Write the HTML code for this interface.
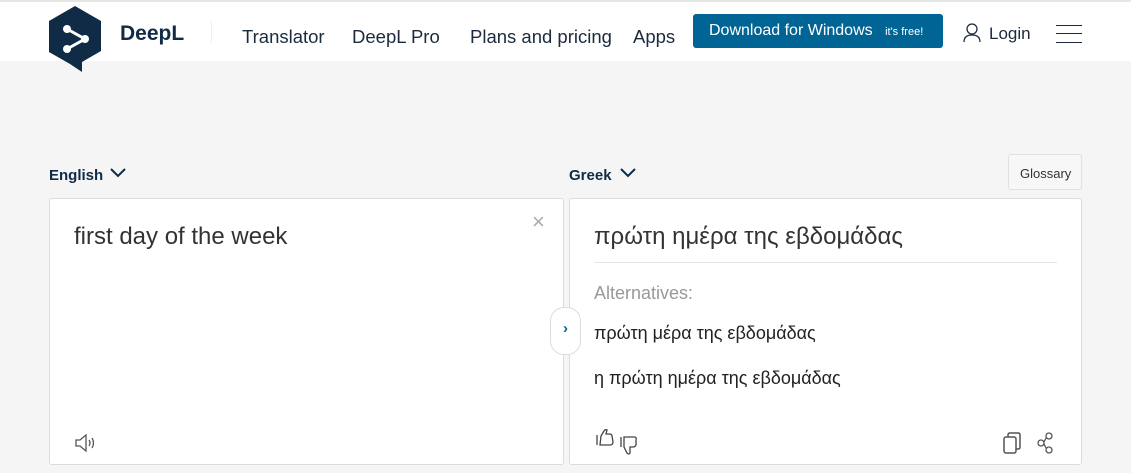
<!DOCTYPE html>
<html><head><meta charset="utf-8"><style>
*{margin:0;padding:0;box-sizing:border-box}
body{width:1131px;height:473px;overflow:hidden;background:#f5f5f5;font-family:"Liberation Sans",sans-serif;position:relative;color:#333}
.hdr{position:absolute;left:0;top:0;width:1131px;height:61px;background:#fff;border-top:2px solid #e6e6e6}
.a{position:absolute;white-space:nowrap}
.nav{font-size:18.5px;color:#1b2b3d;top:24px}
.panel{position:absolute;top:198px;height:267px;background:#fff;border:1px solid #d9dce0;border-radius:3px}
</style></head><body>
<div class="hdr">
<svg class="a" style="left:48px;top:4px" width="54" height="66" viewBox="0 0 54 66"><path d="M27 0 L53 15 L53 45 L34 56 L34 66 L22 58 L1 46 L1 15 Z" fill="#0f2b46"/><circle cx="19" cy="23" r="4" fill="#fff"/><circle cx="37" cy="33" r="4" fill="#fff"/><circle cx="19" cy="43" r="4" fill="#fff"/><path d="M19 23 L37 33 L19 43" stroke="#fff" stroke-width="3" fill="none"/></svg>
<div class="a" style="left:120px;top:20px;font-size:21px;font-weight:bold;color:#0f2b46">DeepL</div>
<div class="a" style="left:211px;top:19px;width:1px;height:22px;background:#eee"></div>
<div class="a nav" style="left:242px">Translator</div>
<div class="a nav" style="left:352px">DeepL Pro</div>
<div class="a nav" style="left:470px">Plans and pricing</div>
<div class="a nav" style="left:633px">Apps</div>
<div class="a" style="left:693px;top:12px;width:250px;height:34px;background:#006494;border-radius:3px;color:#fff;font-size:16px;padding:8px 0 0 16px">Download for Windows <span style="font-size:11px;margin-left:8px">it's free!</span></div>
<svg class="a" style="left:962px;top:21px" width="20" height="20" viewBox="0 0 20 20"><circle cx="10" cy="6" r="5" stroke="#1b2b3d" stroke-width="1.3" fill="none"/><path d="M2 19 Q2 12 10 12 Q18 12 18 19" stroke="#1b2b3d" stroke-width="1.3" fill="none"/></svg>
<div class="a" style="left:989px;top:22px;font-size:17px;color:#1b2b3d">Login</div>
<div class="a" style="left:1056px;top:23px;width:26px;height:18px;border-top:1.5px solid #1b2b3d;border-bottom:1.5px solid #1b2b3d"><div style="margin-top:6.5px;border-top:1.5px solid #1b2b3d"></div></div>
</div>
<div class="a" style="left:49px;top:167px;font-size:15px;font-weight:bold;color:#0f2b46">English</div>
<div class="a" style="left:569px;top:167px;font-size:15px;font-weight:bold;color:#0f2b46">Greek</div>
<svg class="a" style="left:109px;top:167px" width="18" height="12"><path d="M2 2 L9 9 L16 2" stroke="#0f2b46" stroke-width="2" fill="none"/></svg>
<svg class="a" style="left:619px;top:167px" width="18" height="12"><path d="M2 2 L9 9 L16 2" stroke="#0f2b46" stroke-width="2" fill="none"/></svg>
<div class="a" style="left:1008px;top:154px;width:74px;height:36px;border:1px solid #e0e0e0;background:#f7f7f7;border-radius:3px;font-size:13px;padding:11px 0 0 11px;color:#333">Glossary</div>
<div class="panel" style="left:49px;width:515px">
<div class="a" style="left:24px;top:24px;font-size:24px;color:#333">first day of the week</div>
<div class="a" style="left:482px;top:10px;font-size:22px;color:#aaa">×</div>
<svg class="a" style="left:24px;top:234px" width="26" height="20" viewBox="0 0 26 20"><path d="M2 7 H6 L12 2 V18 L6 13 H2 Z" stroke="#555" stroke-width="1.3" fill="none"/><path d="M15 7 Q17 10 15 13 M18 5 Q21 10 18 15" stroke="#555" stroke-width="1.3" fill="none"/></svg>
</div>
<div class="panel" style="left:569px;width:513px">
<div class="a" style="left:24px;top:24px;font-size:24px;color:#333">πρώτη ημέρα της εβδομάδας</div>
<div class="a" style="left:24px;top:63px;width:463px;height:1px;background:#e5e5e5"></div>
<div class="a" style="left:24px;top:84px;font-size:18px;color:#999">Alternatives:</div>
<div class="a" style="left:24px;top:124px;font-size:18px;color:#222">πρώτη μέρα της εβδομάδας</div>
<div class="a" style="left:24px;top:169px;font-size:18px;color:#222">η πρώτη ημέρα της εβδομάδας</div>
<svg class="a" style="left:26px;top:230px" width="50" height="28" viewBox="0 0 50 28"><path d="M1 6 V16 M4 16 H14 Q17 16 17 13 L16 7 Q16 5 13 5 H10 L11 1 Q9 0 8 2 L5 7 Z" stroke="#444" stroke-width="1.3" fill="none"/><path d="M25 8 V18 M28 8 H38 Q41 8 40 11 L40 16 Q39 18 37 18 H34 L34 24 Q33 26 31 24 L28 18 Z" stroke="#444" stroke-width="1.3" fill="none"/></svg>
<svg class="a" style="left:432px;top:232px" width="58" height="24" viewBox="0 0 58 24"><rect x="2" y="6" width="12" height="16" rx="2" stroke="#555" stroke-width="1.5" fill="#fff"/><path d="M6 6 V4 Q6 2 8 2 H16 Q18 2 18 4 V16 Q18 18 16 18 H14" stroke="#555" stroke-width="1.5" fill="none"/><circle cx="47" cy="5" r="3" stroke="#555" stroke-width="1.3" fill="none"/><circle cx="39" cy="12" r="3" stroke="#555" stroke-width="1.3" fill="none"/><circle cx="47" cy="19" r="3" stroke="#555" stroke-width="1.3" fill="none"/><path d="M42 11 L44 7 M42 13 L44 17" stroke="#555" stroke-width="1.3"/></svg>
</div>
<div class="a" style="left:550px;top:307px;width:31px;height:48px;background:#fff;border:1px solid #d9dce0;border-radius:14px;text-align:center;padding-top:12px;color:#006494;font-weight:bold;font-size:15px">›</div>
</body></html>
